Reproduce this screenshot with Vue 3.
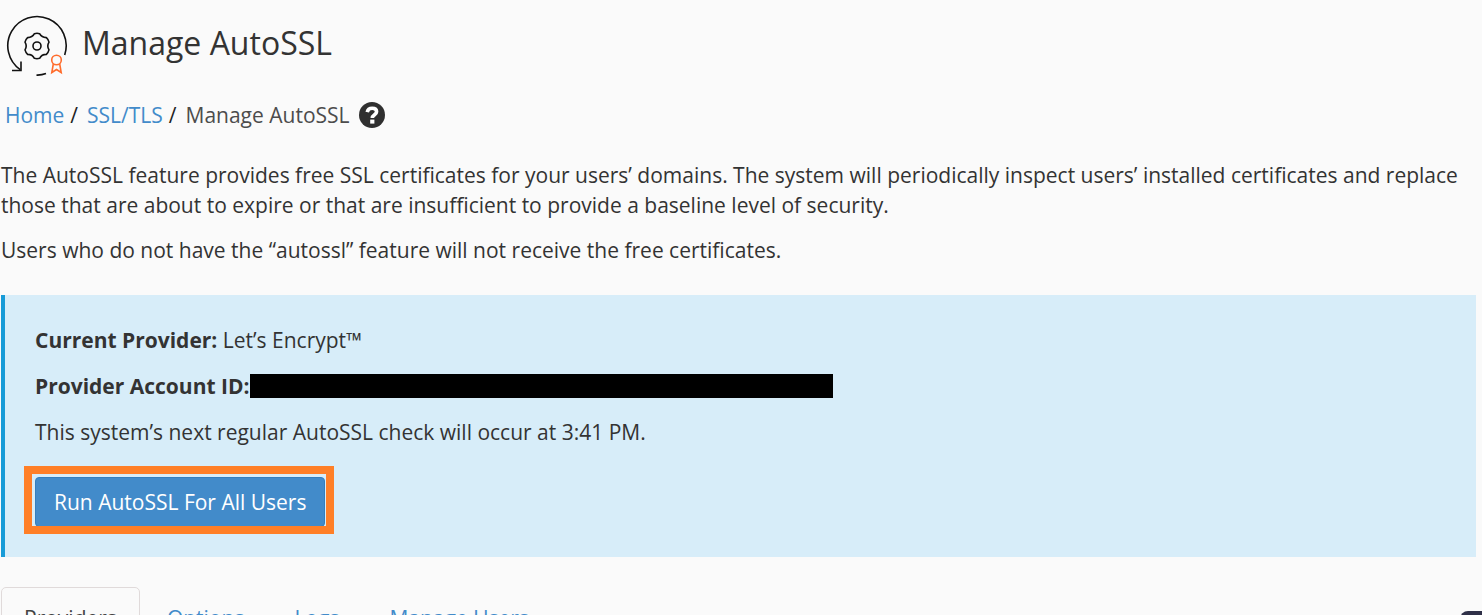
<template>
  <div class="page">
    <header class="page-header">
      <svg class="page-icon" viewBox="0 0 64 64" fill="none" aria-hidden="true">
        <g stroke="#111" stroke-width="1.6">
          <path d="M59.7 40.9 A29.2 29.2 0 1 0 15.2 55.6" />
          <path d="M7 56.5 H16 V47.5" />
          <path d="M31.5 61.1 Q36.5 61.3 41 59.6" />
          <circle cx="32" cy="32" r="4" />
          <path
            d="M29.4 19.7 Q32 18.9 34.6 19.7 Q36.8 23.7 41.4 23.6 Q43.3 25.4 44 28.1 Q41.6 32 44 35.9 Q43.3 38.6 41.4 40.4 Q36.8 40.3 34.6 44.3 Q32 45.1 29.4 44.3 Q27.2 40.3 22.6 40.4 Q20.7 38.6 20 35.9 Q22.4 32 20 28.1 Q20.7 25.4 22.6 23.6 Q27.2 23.7 29.4 19.7 Z"
            stroke-linejoin="round"
          />
        </g>
        <g stroke="#ff6c2c" stroke-width="1.6">
          <circle cx="51.5" cy="46" r="4.8" />
          <path d="M48.3 50 L46.8 58.5 L51.5 55.5 L56.2 58.5 L54.7 50" />
        </g>
      </svg>
      <h1 class="page-title">Manage AutoSSL</h1>
    </header>

    <nav class="breadcrumb" aria-label="Breadcrumb">
      <template v-for="crumb in crumbs" :key="crumb">
        <a href="#">{{ crumb }}</a>
        <span class="separator">/</span>
      </template>
      <span class="current">Manage AutoSSL</span>
      <a class="help" href="#" aria-label="Help">
        <svg viewBox="0 0 26 26" aria-hidden="true">
          <circle cx="13" cy="13" r="13" fill="#2f2f2f" />
          <path
            d="M8.2 10.2 C8.8 7.2 10.8 6.3 13.2 6.3 C16 6.3 17.6 7.8 17.6 9.8 C17.6 12.7 13.3 12.7 13.3 16"
            fill="none"
            stroke="#fff"
            stroke-width="3.6"
          />
          <rect x="11.2" y="17.6" width="4.2" height="4" fill="#fff" />
        </svg>
      </a>
    </nav>

    <p>
      The AutoSSL feature provides free SSL certificates for your users’ domains. The system will
      periodically inspect users’ installed certificates and replace those that are about to expire
      or that are insufficient to provide a baseline level of security.
    </p>
    <p>Users who do not have the “autossl” feature will not receive the free certificates.</p>

    <section class="callout">
      <div><strong>Current Provider:</strong> Let’s Encrypt™</div>
      <div class="account">
        <strong>Provider Account ID:</strong>
        <span class="redacted"></span>
      </div>
      <div>This system’s next regular AutoSSL check will occur at 3:41 PM.</div>
      <div class="actions">
        <div class="highlight">
          <button type="button" class="run-button">Run AutoSSL For All Users</button>
        </div>
      </div>
    </section>

    <nav class="tabs">
      <a
        v-for="tab in tabs"
        :key="tab"
        href="#"
        class="tab"
        :class="{ active: tab === activeTab }"
        @click.prevent="activeTab = tab"
      >
        {{ tab }}
      </a>
    </nav>

    <!-- 右下角悬浮按钮 -->
    <button type="button" class="floating" aria-label="Open"></button>
  </div>
</template>

<script setup>
import { ref } from 'vue'

const crumbs = ['Home', 'SSL/TLS']
const tabs = ['Providers', 'Options', 'Logs', 'Manage Users']
const activeTab = ref('Providers')
</script>

<style>
body {
  background: #fafafa;
}

#app {
  height: 100vh;
  overflow: hidden;
}
</style>

<style scoped>
.page {
  padding: 14px 6px 0 1px;
  font-family: 'Open Sans', 'Noto Sans', sans-serif;
  font-size: 21px;
  line-height: 30px;
  color: #333;
}

.page a {
  color: #428bca;
  text-decoration: none;
}

.page-header {
  display: flex;
  align-items: center;
  gap: 13px;
  padding-left: 4px;
}

.page-icon {
  width: 64px;
  height: 64px;
}

.page-title {
  margin: 0 0 6px;
  font-size: 32px;
  font-weight: 400;
  line-height: 40px;
}

.breadcrumb {
  display: flex;
  align-items: center;
  margin: 22px 0 30px;
  padding-left: 4px;
}

.separator {
  margin: 0 9px 0 6px;
  color: #222;
}

.current {
  color: #4c4c4c;
}

.help {
  display: flex;
  margin-left: 9px;
}

.help svg {
  width: 26px;
  height: 26px;
}

p {
  margin: 0 0 15px;
}

.callout {
  display: flex;
  flex-direction: column;
  gap: 16px;
  margin-top: 30px;
  padding: 30px;
  border-left: 4px solid #179bd7;
  background: #d7edf9;
}

.account {
  display: flex;
  align-items: center;
}

.redacted {
  width: 583px;
  height: 24px;
  background: #000;
}

.actions {
  display: flex;
  margin-top: 14px;
}

/* 橙色标注框，盖在按钮边缘之上 */
.highlight {
  position: relative;
}

.highlight::after {
  content: '';
  position: absolute;
  inset: -11px -9px -7px -11px;
  border: 8px solid #ff7f27;
  pointer-events: none;
}

.run-button {
  display: block;
  height: 50px;
  padding: 0 18px;
  border: 1px solid #357ebd;
  border-radius: 4px;
  background: #428bca;
  color: #fff;
  font: inherit;
}

.tabs {
  display: flex;
  gap: 4px;
  margin-top: 30px;
}

.tab {
  padding: 15px 22px;
  border: 1px solid transparent;
  border-radius: 5px 5px 0 0;
}

.page .tab.active {
  border-color: #e0dada;
  color: #444;
}

.floating {
  position: fixed;
  right: -30px;
  bottom: -46px;
  width: 52px;
  height: 50px;
  border: 0;
  border-radius: 8px;
  background: #2f3048;
}
</style>
